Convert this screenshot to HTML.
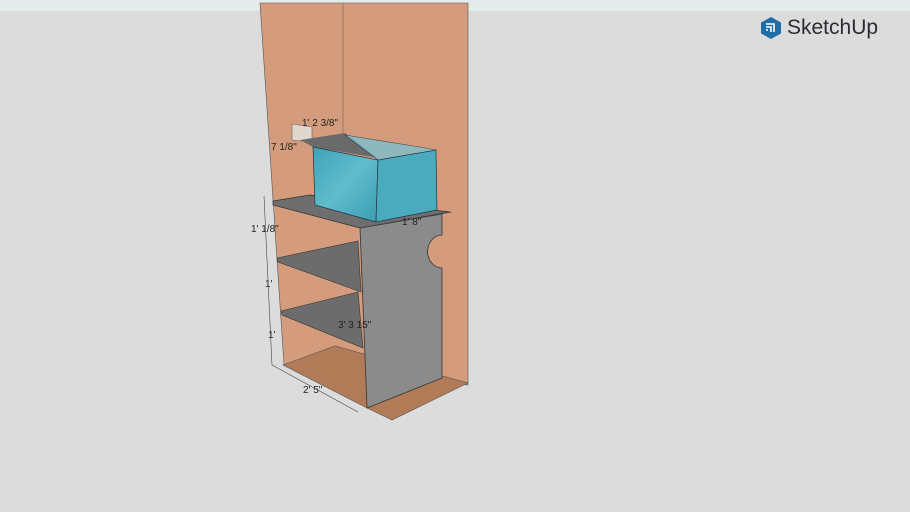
<!DOCTYPE html>
<html><head><style>
html,body{margin:0;padding:0;width:910px;height:512px;overflow:hidden;background:#dcdcdc;font-family:"Liberation Sans",sans-serif}
.top{position:absolute;left:0;top:0;width:910px;height:11px;background:#e5eaed}
.logo{position:absolute;left:760px;top:16px;display:flex;align-items:center;gap:5px;font-size:21px;color:#2b2b33}
</style></head><body>
<div class="top"></div>
<svg width="910" height="512" style="position:absolute;left:0;top:0">
<defs><linearGradient id="g" x1="0" y1="0" x2="1" y2="1"><stop offset="0" stop-color="#3fa3b8"/><stop offset="0.5" stop-color="#5fbccc"/><stop offset="1" stop-color="#3a9db2"/></linearGradient></defs>
<polygon points="260,3 468,3 468,385 284,365" fill="#d49c7c" stroke="#555" stroke-width="0.6"/>
<line x1="343" y1="3" x2="343" y2="140" stroke="#666" stroke-width="0.6"/>
<polygon points="283,365 335,346 468,383 392,420 367,408" fill="#b17b57" stroke="#555" stroke-width="0.6"/>
<polygon points="277,258 358,241 361,292 278,262" fill="#6c6c6c" stroke="#333" stroke-width="0.6"/>
<polygon points="281,311 358,292 363,348 282,315" fill="#6c6c6c" stroke="#333" stroke-width="0.6"/>
<path d="M360,228 L442,214 L442,235 A14,16 0 0 0 442,268 L442,378 L367,408 Z" fill="#8b8b8b" stroke="#333" stroke-width="0.8"/>
<polygon points="273,201 310,195 450,212 360,228 273,205" fill="#6e6e6e" stroke="#333" stroke-width="0.8"/>
<polygon points="292,124 312,127 312,142 292,140" fill="#e0d8cc" stroke="#666" stroke-width="0.6"/>
<polygon points="300,140 345,133 378,158 313,147" fill="#6a6a6a"/>
<polygon points="313,147 378,160 376,222 315,205" fill="url(#g)" stroke="#234" stroke-width="0.7"/>
<polygon points="378,160 436,150 437,210 376,222" fill="#4aaabe" stroke="#234" stroke-width="0.7"/>
<polygon points="345,135 420,147 436,150 378,160" fill="#7fc0cc" stroke="#234" stroke-width="0.6" opacity="0.8"/>
<g font-size="10" fill="#222">
<text x="302" y="126">1' 2 3/8"</text>
<text x="271" y="150">7 1/8"</text>
<text x="251" y="232">1' 1/8"</text>
<text x="265" y="287">1'</text>
<text x="268" y="338">1'</text>
<text x="303" y="393">2' 5"</text>
<text x="402" y="225">1' 8"</text>
<text x="338" y="328">3' 3 15"</text>
</g>
<g stroke="#444" stroke-width="0.6">
<line x1="264" y1="196" x2="272" y2="365"/>
<line x1="272" y1="365" x2="358" y2="412"/>
<line x1="360" y1="228" x2="452" y2="212"/>
</g>
</svg>
<div class="logo"><svg width="22" height="24" viewBox="0 0 22 24"><path d="M11 1 L21 6.5 L21 17.5 L11 23 L1 17.5 L1 6.5Z" fill="#1f6ea8"/><path d="M6 8 h8 v8 M6 11 h5 v5 M6 14 h2" stroke="#fff" stroke-width="1.6" fill="none"/></svg>SketchUp</div>
</body></html>
